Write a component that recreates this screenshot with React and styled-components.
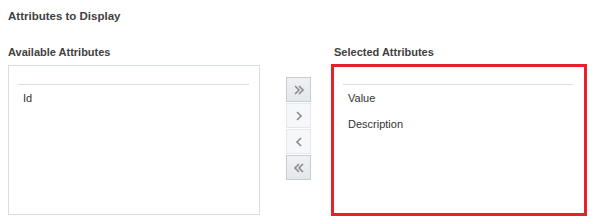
import styled, { createGlobalStyle } from "styled-components"

const GlobalStyle = createGlobalStyle`
	body {
		margin: 0;
		background: #ffffff;
		font-family: "Liberation Sans", Arial, sans-serif;
		color: #333333;
	}
`

const available = ["Id"]
const selected = ["Value", "Description"]

export default function App() {
	return (
		<>
			<GlobalStyle />
			<Page>
				<Title>Attributes to Display</Title>
				<Shuttle>
					<Column>
						<Label>Available Attributes</Label>
						<ListBox>
							<Divider />
							{available.map((a) => (
								<Item key={a}>{a}</Item>
							))}
						</ListBox>
					</Column>
					<Buttons>
						<MoveButton strong aria-label="Move all">
							<Chevron double />
						</MoveButton>
						<MoveButton aria-label="Move">
							<Chevron />
						</MoveButton>
						<MoveButton aria-label="Remove">
							<Chevron left />
						</MoveButton>
						<MoveButton strong aria-label="Remove all">
							<Chevron double left />
						</MoveButton>
					</Buttons>
					<Column>
						<Label inset>Selected Attributes</Label>
						<ListBox highlighted>
							<Divider />
							{selected.map((a) => (
								<Item key={a}>{a}</Item>
							))}
						</ListBox>
					</Column>
				</Shuttle>
			</Page>
		</>
	)
}

function Chevron({ double, left }) {
	const paths = double ? ["M2 2l4 4-4 4", "M6 2l4 4-4 4"] : ["M4 2l4 4-4 4"]
	return (
		<svg
			width="12"
			height="12"
			viewBox="0 0 12 12"
			style={{ transform: left ? "scaleX(-1)" : "none" }}
		>
			{paths.map((d) => (
				<path key={d} d={d} fill="none" stroke="#8a8e93" strokeWidth="1.7" />
			))}
		</svg>
	)
}

const Page = styled.div`
	padding: 9px 8px 0 8px;
`

const Title = styled.div`
	font-size: 11.5px;
	font-weight: bold;
	line-height: 14px;
	color: #3f3f3f;
	margin-bottom: 22px;
`

const Shuttle = styled.div`
	display: flex;
	align-items: flex-start;
`

const Column = styled.div`
	display: flex;
	flex-direction: column;
`

const Label = styled.div`
	font-size: 11px;
	font-weight: bold;
	line-height: 14px;
	color: #3f3f3f;
	margin-bottom: 6px;
	padding-left: ${(p) => (p.inset ? "3px" : "0")};
`

const ListBox = styled.div`
	box-sizing: border-box;
	width: ${(p) => (p.highlighted ? "256px" : "252px")};
	height: ${(p) => (p.highlighted ? "152px" : "150px")};
	border: ${(p) => (p.highlighted ? "3px solid #e8202a" : "1px solid #d6dde4")};
	margin-top: ${(p) => (p.highlighted ? "-1px" : "0")};
	padding: ${(p) => (p.highlighted ? "17px 11px 0 9px" : "18px 10px 0 9px")};
	background: #ffffff;
`

const Divider = styled.div`
	height: 1px;
	background: #d8dfe5;
`

const Item = styled.div`
	height: 26px;
	line-height: 26px;
	padding-left: 5px;
	font-size: 11px;
	color: #333333;
`

const Buttons = styled.div`
	display: flex;
	flex-direction: column;
	gap: 1px;
	margin: 32px 20px 0 26px;
`

const MoveButton = styled.button`
	box-sizing: border-box;
	width: 25px;
	height: 25px;
	padding: 0;
	display: flex;
	align-items: center;
	justify-content: center;
	border: 1px solid ${(p) => (p.strong ? "#c5ccd3" : "#e4e8ec")};
	background: ${(p) =>
		p.strong ? "linear-gradient(#eff1f3, #e4e7ea)" : "#f5f7f9"};
	border-radius: 0;
	cursor: pointer;
`
